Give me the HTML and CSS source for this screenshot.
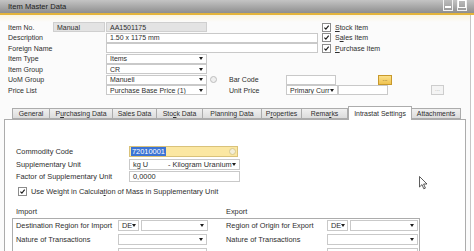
FILE: index.html
```html
<!DOCTYPE html>
<html lang="en">
<head>
    <meta charset="UTF-8">
    <meta name="viewport" content="width=device-width, initial-scale=1.0">
    <link rel="stylesheet" href="styles.css">
</head>
<body>

<div class="titlebar">
    <span class="title">Item Master Data</span>
    <div class="winbtns">
        <span class="winbtn min"></span>
        <span class="winbtn max"></span>
    </div>
</div>
<div class="accent"></div>

<div class="window">
    <div class="header">
        <div class="row">
            <span class="lbl short">Item No.</span>
            <span class="fld gray w52">Manual</span>
            <span class="fld gray w101 ml1">AA1501175</span>
            <span class="chk ml115"><span class="box"><svg viewBox="0 0 8 8"><path d="M1.6 4.1 L3.3 5.9 L6.5 1.9"/></svg></span><span><u>S</u>tock Item</span></span>
        </div>
        <div class="row">
            <span class="lbl">Description</span>
            <span class="fld w212">1.50 x 1175 mm</span>
            <span class="chk ml4"><span class="box"><svg viewBox="0 0 8 8"><path d="M1.6 4.1 L3.3 5.9 L6.5 1.9"/></svg></span><span>S<u>a</u>les Item</span></span>
        </div>
        <div class="row">
            <span class="lbl">Foreign Name</span>
            <span class="fld w212"></span>
            <span class="chk ml4"><span class="box"><svg viewBox="0 0 8 8"><path d="M1.6 4.1 L3.3 5.9 L6.5 1.9"/></svg></span><span><u>P</u>urchase Item</span></span>
        </div>
        <div class="row">
            <span class="lbl">Item Type</span>
            <span class="fld sel w101">Items</span>
        </div>
        <div class="row">
            <span class="lbl">Item Group</span>
            <span class="fld sel w101">CR</span>
        </div>
        <div class="row">
            <span class="lbl">UoM Group</span>
            <span class="fld sel w101">Manuell</span>
            <span class="info"></span>
            <span class="lbl mid">Bar Code</span>
            <span class="fld w50"></span>
            <span class="btn yellow ml42">...</span>
        </div>
        <div class="row">
            <span class="lbl">Price List</span>
            <span class="fld sel w101">Purchase Base Price (1)</span>
            <span class="lbl mid ml22">Unit Price</span>
            <span class="fld sel w52">Primary Curr</span>
            <span class="fld w50"></span>
            <span class="btn plain ml43">...</span>
        </div>
    </div>

    <div class="tabs">
        <span class="tab w38">General</span>
        <span class="tab w63"><span>P<u>u</u>rchasing Data</span></span>
        <span class="tab w44">Sales Data</span>
        <span class="tab w46"><span>Sto<u>c</u>k Data</span></span>
        <span class="tab w59">Planning Data</span>
        <span class="tab w40"><span>P<u>r</u>operties</span></span>
        <span class="tab w46"><span>Rema<u>r</u>ks</span></span>
        <span class="tab active">Intrastat Settings</span>
        <span class="tab w49">Attachments</span>
    </div>

    <div class="panel">
        <div class="prow">
            <span class="plbl">Commodity Code</span>
            <span class="fld pfld hilite"><span class="selected">72010001</span><span class="info soft"></span></span>
        </div>
        <div class="prow">
            <span class="plbl">Supplementary Unit</span>
            <span class="fld sel pfld wide"><span class="unit">kg U</span>- Kilogram Uranium</span>
        </div>
        <div class="prow">
            <span class="plbl">Factor of Supplementary Unit</span>
            <span class="fld pfld wide">0,0000</span>
        </div>
        <div class="prow check-row">
            <span class="chk"><span class="box"><svg viewBox="0 0 8 8"><path d="M1.6 4.1 L3.3 5.9 L6.5 1.9"/></svg></span><span>Use Weight in Calcula<u>t</u>ion of Mass in Supplementary Unit</span></span>
        </div>

        <div class="trade">
            <div class="trade-heads">
                <span class="col">Import</span>
                <span class="col">Export</span>
            </div>
            <div class="trade-box">
                <div class="col">
                    <div class="prow">
                        <span class="tlbl">Destination Region for Import</span>
                        <span class="fld sel de">DE</span>
                        <span class="fld sel region"></span>
                    </div>
                    <div class="prow">
                        <span class="tlbl">Nature of Transactions</span>
                        <span class="fld sel full"></span>
                    </div>
                    <div class="prow">
                        <span class="tlbl">Statistical Procedure</span>
                        <span class="fld sel full"></span>
                    </div>
                </div>
                <div class="col">
                    <div class="prow">
                        <span class="tlbl">Region of Origin for Export</span>
                        <span class="fld sel de">DE</span>
                        <span class="fld sel region"></span>
                    </div>
                    <div class="prow">
                        <span class="tlbl">Nature of Transactions</span>
                        <span class="fld sel full"></span>
                    </div>
                    <div class="prow">
                        <span class="tlbl">Statistical Procedure</span>
                        <span class="fld sel full"></span>
                    </div>
                </div>
            </div>
        </div>
    </div>
</div>

<svg class="cursor" viewBox="0 0 9 14" width="9" height="14">
    <path d="M0.5 0.5 L0.5 11 L3 8.6 L4.8 12.8 L6.4 12.1 L4.6 8 L8 8 Z" fill="#fff" stroke="#333" stroke-width="0.8"/>
</svg>

</body>
</html>
```

FILE: styles.css
```css
* {
    box-sizing: border-box;
}

body {
    margin: 0;
    width: 474px;
    height: 251px;
    overflow: hidden;
    position: relative;
    background: #fff;
    font-family: "Liberation Sans", Arial, sans-serif;
    color: #2e2e2e;
}

/* Barra de titulo */
.titlebar {
    height: 13px;
    display: flex;
    justify-content: space-between;
    align-items: center;
    padding-left: 8px;
    background: linear-gradient(#c4c4c4, #8e8e8e);
}

.title {
    font-size: 7.6px;
    color: #1c1c1c;
}

.winbtns {
    display: flex;
    gap: 4px;
    align-self: flex-start;
    margin-right: 7px;
}

.winbtn {
    width: 10px;
    height: 11px;
    border: 1px solid #f2f2f2;
    border-top: none;
    background: linear-gradient(#bdbdbd, #9a9a9a);
    display: flex;
    justify-content: center;
    align-items: flex-end;
}

.winbtn.min::after {
    content: '';
    width: 6px;
    height: 2px;
    margin-bottom: 2px;
    background: #fff;
}

.winbtn.max::after {
    content: '';
    width: 6px;
    height: 6px;
    margin-bottom: 2px;
    border: 1px solid #fff;
}

.accent {
    height: 2px;
    background: #e4b43a;
}

.window {
    width: 471px;
    height: 236px;
    overflow: hidden;
    border-right: 1px solid #c6c6c6;
    background: linear-gradient(#fbf4df, #fbfbfb 7px);
}

/* Cabecera */
.header {
    display: flex;
    flex-direction: column;
    padding: 7px 0 0 8px;
}

.row {
    height: 10.5px;
    display: flex;
    align-items: center;
    font-size: 7px;
}

.lbl {
    width: 98px;
    flex: none;
    white-space: nowrap;
}

.lbl.short {
    width: 45px;
}

.lbl.mid {
    width: 57px;
}

.fld {
    height: 10px;
    flex: none;
    display: flex;
    align-items: center;
    padding: 0 3px;
    background: #fff;
    border: 1px solid #c9c9c9;
    white-space: nowrap;
    overflow: hidden;
}

.fld.gray {
    background: #e3e3e3;
    border-color: #cfcfcf;
}

.fld.sel::after {
    content: '';
    flex: none;
    margin-left: auto;
    border-left: 2.5px solid transparent;
    border-right: 2.5px solid transparent;
    border-top: 3px solid #1e1e1e;
}

.w50 { width: 50px; }
.w52 { width: 52px; }
.w101 { width: 101px; }
.w212 { width: 212px; }

.ml1 { margin-left: 1px; }
.ml4 { margin-left: 4px; }
.ml22 { margin-left: 22px; }
.ml42 { margin-left: 42px; }
.ml43 { margin-left: 43px; }
.ml115 { margin-left: 115px; }

.chk {
    display: flex;
    align-items: center;
    gap: 4px;
    white-space: nowrap;
}

.box {
    width: 9px;
    height: 9px;
    flex: none;
    background: #fff;
    border: 1px solid #8c8c8c;
}

.box svg {
    display: block;
    width: 7px;
    height: 7px;
    fill: none;
    stroke: #1e1e1e;
    stroke-width: 1.3;
}

.info {
    width: 7px;
    height: 7px;
    flex: none;
    margin: 0 12px 0 3px;
    border-radius: 50%;
    border: 1px solid #bdbdbd;
    background: #efefef;
}

.info.soft {
    margin: 0 0 0 auto;
    border-color: #d8c98e;
    background: #f3eed8;
}

.btn {
    width: 14px;
    height: 10px;
    flex: none;
    display: flex;
    justify-content: center;
    align-items: center;
    font-size: 6px;
    line-height: 1;
    padding-bottom: 2px;
}

.btn.yellow {
    background: linear-gradient(#fbe08a, #efc350);
    border: 1px solid #c8992c;
    color: #5a4300;
}

.btn.plain {
    width: 13px;
    background: #f4f4f4;
    border: 1px solid #cdcdcd;
    color: #a0a0a0;
}

/* Pestanas */
.tabs {
    display: flex;
    align-items: flex-end;
    margin-top: 10.5px;
    padding-left: 12px;
    font-size: 6.9px;
    position: relative;
    z-index: 1;
}

.tab {
    height: 11px;
    display: flex;
    justify-content: center;
    align-items: center;
    white-space: nowrap;
    background: linear-gradient(#f0f0f0, #dcdcdc);
    border: 1px solid #acacac;
    border-left: none;
}

.tab:first-child {
    border-left: 1px solid #acacac;
}

.tab.active {
    width: 64px;
    height: 14px;
    margin-bottom: -1px;
    background: #fff;
    border-left: 1px solid #acacac;
    border-bottom: none;
}

.w38 { width: 38px; }
.w40 { width: 40px; }
.w44 { width: 44px; }
.w46 { width: 46px; }
.w49 { width: 49px; }
.w59 { width: 59px; }
.w63 { width: 63px; }

/* Panel */
.panel {
    width: 462px;
    height: 140px;
    margin-left: 4px;
    padding: 26px 0 0 11px;
    background: #fff;
    border: 1px solid #acacac;
    border-bottom: none;
    font-size: 7.4px;
    display: flex;
    flex-direction: column;
    gap: 1.6px;
}

.prow {
    height: 11px;
    display: flex;
    align-items: center;
    flex: none;
}

.plbl {
    width: 113px;
    flex: none;
    white-space: nowrap;
}

.pfld {
    width: 109px;
    height: 11px;
}

.pfld.wide {
    width: 111px;
}

.hilite {
    padding-left: 1px;
    padding-right: 1px;
    background: #fbe7a2;
    border-color: #d9c27a;
}

.selected {
    background: #3b73d4;
    color: #fff;
    padding: 0 1px;
}

.unit {
    width: 35px;
}

.check-row {
    margin-top: 2px;
    padding-left: 2px;
}

.trade {
    margin-top: 9px;
    margin-left: -4px;
    width: 408px;
}

.trade-heads {
    display: flex;
    gap: 19px;
    padding-left: 4px;
    height: 10px;
}

.trade-heads .col {
    width: 191px;
}

.trade-box {
    display: flex;
    gap: 19px;
    margin-top: 1px;
    padding: 1px 0 0 3px;
    border: 1px solid #acacac;
    border-bottom: none;
}

.trade-box .col {
    width: 191px;
    display: flex;
    flex-direction: column;
    gap: 3px;
}

.tlbl {
    width: 102px;
    flex: none;
    white-space: nowrap;
}

.trade-box .col + .col .tlbl {
    width: 101px;
}

.de {
    width: 21px;
    height: 11px;
    padding-right: 4px;
}

.region {
    width: 67px;
    height: 11px;
    margin-left: 2px;
}

.full {
    width: 89px;
    height: 11px;
}

.trade-box .col + .col .region {
    width: 68px;
}

.trade-box .col + .col .full {
    width: 91px;
}

/* Puntero del raton */
.cursor {
    position: absolute;
    left: 419px;
    top: 176px;
}
```
